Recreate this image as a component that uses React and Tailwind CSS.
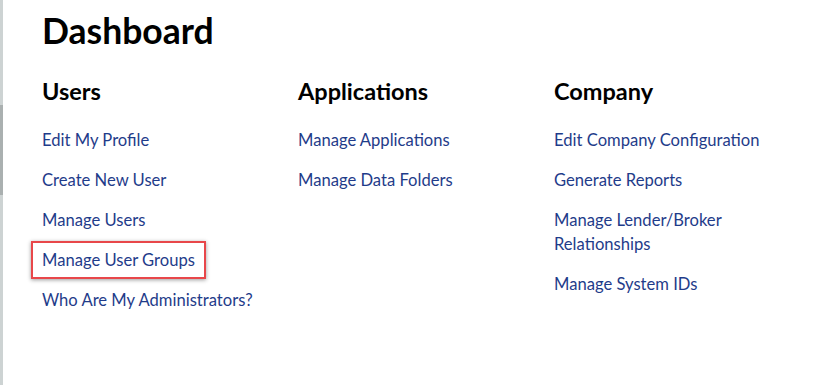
import React from "react";

// Dashboard landing: three columns of admin links.
const columns = [
  {
    title: "Users",
    links: [
      "Edit My Profile",
      "Create New User",
      "Manage Users",
      "Manage User Groups",
      "Who Are My Administrators?",
    ],
  },
  {
    title: "Applications",
    links: ["Manage Applications", "Manage Data Folders"],
  },
  {
    title: "Company",
    links: [
      "Edit Company Configuration",
      "Generate Reports",
      "Manage Lender/Broker Relationships",
      "Manage System IDs",
    ],
  },
];

export default function App() {
  return (
    <div
      className="flex min-h-screen bg-white"
      style={{ fontFamily: "Lato, 'Liberation Sans', sans-serif" }}
    >
      {/* left edge strip */}
      <div className="flex w-[3px] flex-col">
        <div className="h-[105px] bg-[#cdd3d3]" />
        <div className="h-[90px] bg-[#aab0b0]" />
        <div className="flex-1 bg-[#cdd3d3]" />
      </div>

      <div className="flex-1 pl-[39px] pt-[9px]">
        <h1 className="text-[35.5px] font-bold leading-[44px] text-black">
          Dashboard
        </h1>

        <div className="mt-[23px] flex">
          {columns.map((col) => (
            <div key={col.title} className="w-[256px] shrink-0">
              <h2 className="text-[23.5px] font-bold leading-[30px] text-black">
                {col.title}
              </h2>
              <ul className="mt-[22px] flex flex-col gap-[16px]">
                {col.links.map((link) => (
                  <li key={link} className="max-w-[222px]">
                    {link === "Manage User Groups" ? (
                      <a
                        href="#"
                        className="-mx-[11px] -my-[7px] inline-block border-2 border-[#e8474a] px-[9px] py-[5px] text-[16.6px] leading-[24px] text-[#1f3c8a] shadow-[0_1px_4px_rgba(0,0,0,0.4)]"
                      >
                        {link}
                      </a>
                    ) : (
                      <a
                        href="#"
                        className="text-[16.6px] leading-[24px] text-[#1f3c8a]"
                      >
                        {link}
                      </a>
                    )}
                  </li>
                ))}
              </ul>
            </div>
          ))}
        </div>
      </div>
    </div>
  );
}
